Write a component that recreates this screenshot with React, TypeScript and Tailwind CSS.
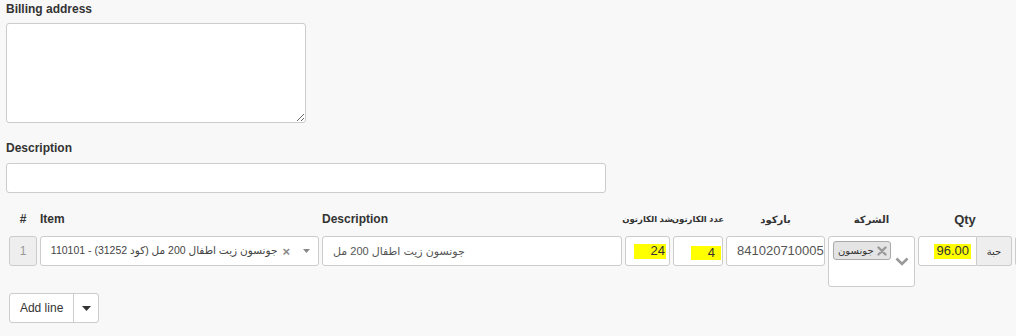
const font = "font-['Liberation_Sans','DejaVu_Sans',Arial,sans-serif]";

const Caret = () => (
  <svg width="9" height="5" viewBox="0 0 9 5" className="block">
    <path d="M0 0h9L4.5 5z" fill="#333" />
  </svg>
);

const HeaderCell = ({ w, children, left = false }: { w: string; children?: React.ReactNode; left?: boolean }) => (
  <div className={`${w} shrink-0 flex ${left ? "justify-start" : "justify-center"} whitespace-nowrap`}>{children}</div>
);

const App = () => {
  return (
    <div className={`w-full min-h-[336px] overflow-hidden bg-[#f8f8f8] text-[12px] text-[#333] ${font}`}>
      <div className="pl-[6px] pt-[1px]">
        <label className="block font-bold leading-[17px]">Billing address</label>
        <textarea className="mt-[5px] block h-[100px] w-[300px] rounded-[3px] border border-[#ccc] bg-white" />
        <label className="mt-[17px] block font-bold leading-[17px]">Description</label>
        <div className="mt-[6px] h-[30px] w-[600px] rounded-[3px] border border-[#ccc] bg-white" />
      </div>

      <div className="pl-[9px]">
        {/* header */}
        <div className="mt-[18px] flex items-center gap-[3px] font-bold leading-[17px]">
          <HeaderCell w="w-[28px]">#</HeaderCell>
          <HeaderCell w="w-[279px]" left>Item</HeaderCell>
          <HeaderCell w="w-[300px]" left>Description</HeaderCell>
          <HeaderCell w="w-[45px]"><span dir="rtl" className="text-[8.5px]">شد الكارتون</span></HeaderCell>
          <HeaderCell w="w-[50px]"><span dir="rtl" className="text-[8.5px]">عدد الكارتون</span></HeaderCell>
          <HeaderCell w="w-[99px]"><span dir="rtl" className="text-[10px]">باركود</span></HeaderCell>
          <HeaderCell w="w-[87px]"><span dir="rtl" className="text-[10px]">الشركة</span></HeaderCell>
          <HeaderCell w="w-[94px]"><span className="text-[13px]">Qty</span></HeaderCell>
        </div>

        {/* line */}
        <div className="mt-[8px] flex items-start gap-[3px]">
          <div className="flex h-[30px] w-[28px] shrink-0 items-center justify-center rounded-[3px] border border-[#ccc] bg-[#eee] text-[#999]">1</div>

          <div className="flex h-[30px] w-[279px] shrink-0 items-center rounded-[3px] border border-[#ccc] bg-white pl-[8px] pr-[8px] text-[#444]">
            <span dir="rtl" className="min-w-0 flex-1 overflow-hidden whitespace-nowrap text-right text-[10.5px]">جونسون زيت اطفال 200 مل (كود 31252) - 110101</span>
            <span className="ml-[5px] text-[13px] font-bold leading-none text-[#888]">×</span>
            <svg width="7" height="4" viewBox="0 0 7 4" className="ml-[13px] block shrink-0">
              <path d="M0 0h7L3.5 4z" fill="#888" />
            </svg>
          </div>

          <div className="flex h-[30px] w-[300px] shrink-0 items-center rounded-[3px] border border-[#ccc] bg-white px-[10px] text-[11px] text-[#555]">
            <span dir="rtl">جونسون زيت اطفال 200 مل</span>
          </div>

          <div className="flex h-[30px] w-[45px] shrink-0 items-center justify-end rounded-[3px] border border-[#ccc] bg-white pr-[3px] text-[#333]">
            <span className="flex h-[15px] w-[32px] items-center justify-end bg-[#ffff00] pr-[1px] text-[13px]">24</span>
          </div>

          <div className="flex h-[30px] w-[50px] shrink-0 items-center justify-end rounded-[3px] border border-[#ccc] bg-white pr-[1px] text-[#333]">
            <span className="mt-[4px] flex h-[14px] w-[30px] items-center justify-end bg-[#ffff00] pr-[6px] text-[13px]">4</span>
          </div>

          <div className="flex h-[30px] w-[99px] shrink-0 items-center overflow-hidden rounded-[3px] border border-[#ccc] bg-white pl-[10px] text-[13px] text-[#555]">
            <span className="whitespace-nowrap">8410207100055</span>
          </div>

          <div className="flex h-[51px] w-[87px] shrink-0 items-start justify-between rounded-[3px] border border-[#ccc] bg-white pl-[4px] pr-[5px] pt-[4px]">
            <span className="flex h-[19px] items-center gap-[3px] rounded-[3px] border border-[#aaa] bg-[#e4e4e4] pl-[4px] pr-[3px] text-[10px] text-[#333]">
              <span dir="rtl">جونسون</span>
              <svg width="10" height="10" viewBox="0 0 10 10" className="block">
                <path d="M1.5 1.5l7 7M8.5 1.5l-7 7" stroke="#999" strokeWidth="2.4" strokeLinecap="round" />
              </svg>
            </span>
            <svg width="14" height="9" viewBox="0 0 14 9" className="mt-[16px] block">
              <path d="M1.5 1.5L7 7l5.5-5.5" stroke="#999" strokeWidth="2.6" fill="none" />
            </svg>
          </div>

          <div className="flex h-[30px] w-[94px] shrink-0">
            <div className="flex w-[59px] items-center justify-end rounded-l-[3px] border border-[#ccc] bg-white pr-[5px]">
              <span className="flex h-[15px] items-center bg-[#ffff00] px-[2px] text-[13px] text-[#333]">96.00</span>
            </div>
            <div className="flex w-[35px] items-center justify-center rounded-r-[3px] border border-l-0 border-[#ccc] bg-[#eee] text-[10px] text-[#333]">
              <span dir="rtl">حبة</span>
            </div>
          </div>

          <div className="h-[30px] w-[20px] shrink-0 rounded-l-[3px] border border-[#ccc] bg-[#f4f4f4]" />
        </div>

        {/* add line */}
        <div className="mt-[6px] flex h-[30px] w-[90px] rounded-[3px] border border-[#ccc] bg-white">
          <button className="w-[64px] whitespace-nowrap text-[12px] text-[#333]">Add line</button>
          <div className="flex w-[25px] items-center justify-center border-l border-[#ccc]">
            <Caret />
          </div>
        </div>
      </div>
    </div>
  );
};

export default App;
